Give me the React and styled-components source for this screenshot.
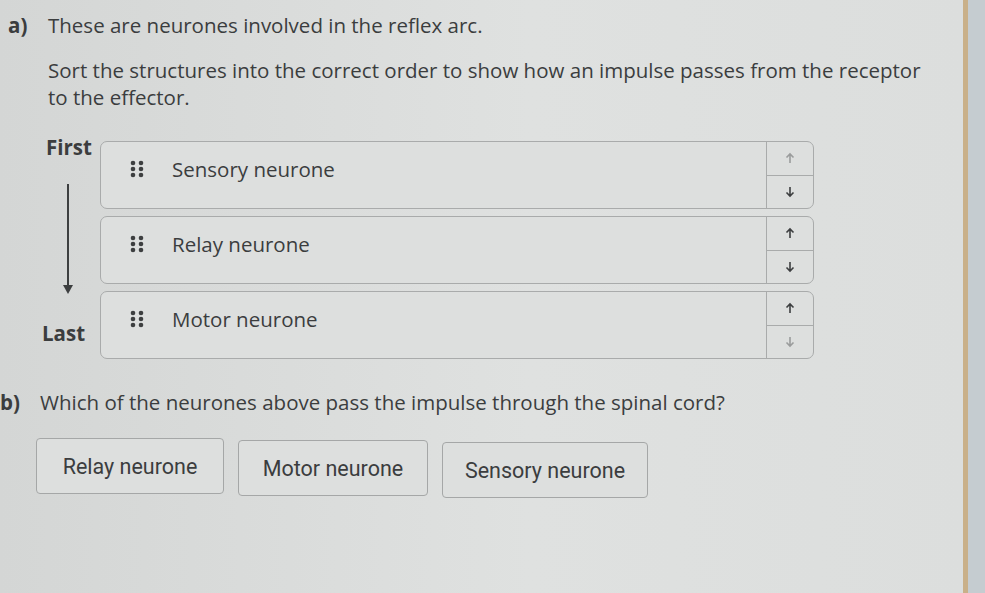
import styled, { createGlobalStyle } from "styled-components";

const GlobalStyle = createGlobalStyle`
  html, body {
    margin: 0;
    padding: 0;
    background: #dadcdb;
  }
  body {
    font-family: "Open Sans", "Liberation Sans", sans-serif;
    color: #3b3d3e;
  }
`;

const Screen = styled.div`
  display: flex;
  width: 985px;
  height: 593px;
  overflow: hidden;
`;

const Sheet = styled.div`
  flex: 0 0 963px;
  background: linear-gradient(90deg, #d4d6d5 0%, #dfe1e0 55%, #dcdedd 100%);
  padding-top: 12px;
  box-sizing: border-box;
`;

const Bezel = styled.div`
  flex: 1;
  border-left: 5px solid #c9b089;
  background: #c5ccd0;
`;

const Question = styled.div`
  display: flex;
  padding-left: ${(p) => p.indent}px;
  margin-top: ${(p) => p.top || 0}px;
`;

const Part = styled.div`
  flex: 0 0 ${(p) => p.width}px;
  font-size: 20.5px;
  font-weight: 700;
  line-height: 27px;
`;

const Body = styled.div`
  flex: 1;
`;

const Prompt = styled.p`
  margin: 0;
  font-size: 20.5px;
  line-height: 27px;
  margin-bottom: ${(p) => p.gap || 0}px;
`;

const Sorter = styled.div`
  display: flex;
  margin-top: 26px;
  margin-left: -2px;
`;

const Scale = styled.div`
  flex: 0 0 54px;
  display: flex;
  flex-direction: column;
  align-items: flex-start;
`;

const End = styled.span`
  font-size: 20.5px;
  font-weight: 700;
  line-height: 20px;
  margin-left: ${(p) => p.shift || 0}px;
`;

const ArrowWrap = styled.div`
  height: 110px;
  margin: 27px 0 29px 16px;
`;

const List = styled.div`
  display: flex;
  flex-direction: column;
  gap: 7px;
  margin-top: 4px;
  width: 714px;
`;

const Item = styled.div`
  display: flex;
  height: 68px;
  border: 1px solid #a9abab;
  border-radius: 7px;
  background: #dddfde;
  box-sizing: border-box;
`;

const Handle = styled.div`
  flex: 0 0 71px;
  display: flex;
  align-items: center;
  padding-left: 29px;
  box-sizing: border-box;
  margin-top: -12px;
`;

const ItemText = styled.div`
  flex: 1;
  font-size: 20.5px;
  margin-top: -12px;
  display: flex;
  align-items: center;
`;

const Controls = styled.div`
  flex: 0 0 46px;
  display: flex;
  flex-direction: column;
  border-left: 1px solid #a9abab;
`;

const Move = styled.div`
  flex: 1;
  display: flex;
  align-items: center;
  justify-content: center;
  color: ${(p) => (p.off ? "#9a9c9c" : "#3d3f40")};
  & + & {
    border-top: 1px solid #a9abab;
  }
`;

const Options = styled.div`
  display: flex;
  gap: 14px;
  margin-top: 22px;
  margin-left: -4px;
`;

const Option = styled.div`
  width: ${(p) => p.width}px;
  height: 56px;
  border: 1px solid #a5a7a7;
  border-radius: 4px;
  background: #dddfde;
  box-sizing: border-box;
  display: flex;
  align-items: center;
  justify-content: center;
  font-family: Roboto, "Open Sans", sans-serif;
  font-size: 21.5px;
  margin-top: ${(p) => p.drop || 0}px;
`;

const Dots = () => (
  <svg width="14" height="18" viewBox="0 0 14 18">
    {[3, 9, 15].map((y) =>
      [3, 11].map((x) => <circle key={`${x}-${y}`} cx={x} cy={y} r="2.3" fill="#3d3f40" />)
    )}
  </svg>
);

const Arrow = ({ up }) => (
  <svg width="10" height="12" viewBox="0 0 10 12" style={{ transform: up ? "none" : "rotate(180deg)" }}>
    <path d="M5 11V2M1.5 5.5L5 2l3.5 3.5" fill="none" stroke="currentColor" strokeWidth="1.6" />
  </svg>
);

const DownLine = () => (
  <svg width="12" height="110" viewBox="0 0 12 110">
    <line x1="6" y1="0" x2="6" y2="101" stroke="#3d3f40" strokeWidth="2" />
    <path d="M1 101h10l-5 9z" fill="#3d3f40" />
  </svg>
);

const items = ["Sensory neurone", "Relay neurone", "Motor neurone"];

const choices = [
  { label: "Relay neurone", width: 188, drop: 0 },
  { label: "Motor neurone", width: 190, drop: 2 },
  { label: "Sensory neurone", width: 206, drop: 4 },
];

const App = () => {
  return (
    <Screen>
      <GlobalStyle />
      <Sheet>
        <Question indent={8}>
          <Part width={40}>a)</Part>
          <Body>
            <Prompt gap={18}>These are neurones involved in the reflex arc.</Prompt>
            <Prompt>
              Sort the structures into the correct order to show how an impulse passes from the receptor
              <br />
              to the effector.
            </Prompt>
            <Sorter>
              <Scale>
                <End>First</End>
                <ArrowWrap>
                  <DownLine />
                </ArrowWrap>
                <End shift={-4}>Last</End>
              </Scale>
              <List>
                {items.map((name, i) => (
                  <Item key={name}>
                    <Handle>
                      <Dots />
                    </Handle>
                    <ItemText>{name}</ItemText>
                    <Controls>
                      <Move off={i === 0}>
                        <Arrow up />
                      </Move>
                      <Move off={i === items.length - 1}>
                        <Arrow />
                      </Move>
                    </Controls>
                  </Item>
                ))}
              </List>
            </Sorter>
          </Body>
        </Question>
        <Question indent={0} top={30}>
          <Part width={40}>b)</Part>
          <Body>
            <Prompt>Which of the neurones above pass the impulse through the spinal cord?</Prompt>
            <Options>
              {choices.map((c) => (
                <Option key={c.label} width={c.width} drop={c.drop}>
                  {c.label}
                </Option>
              ))}
            </Options>
          </Body>
        </Question>
      </Sheet>
      <Bezel />
    </Screen>
  );
};

export default App;
